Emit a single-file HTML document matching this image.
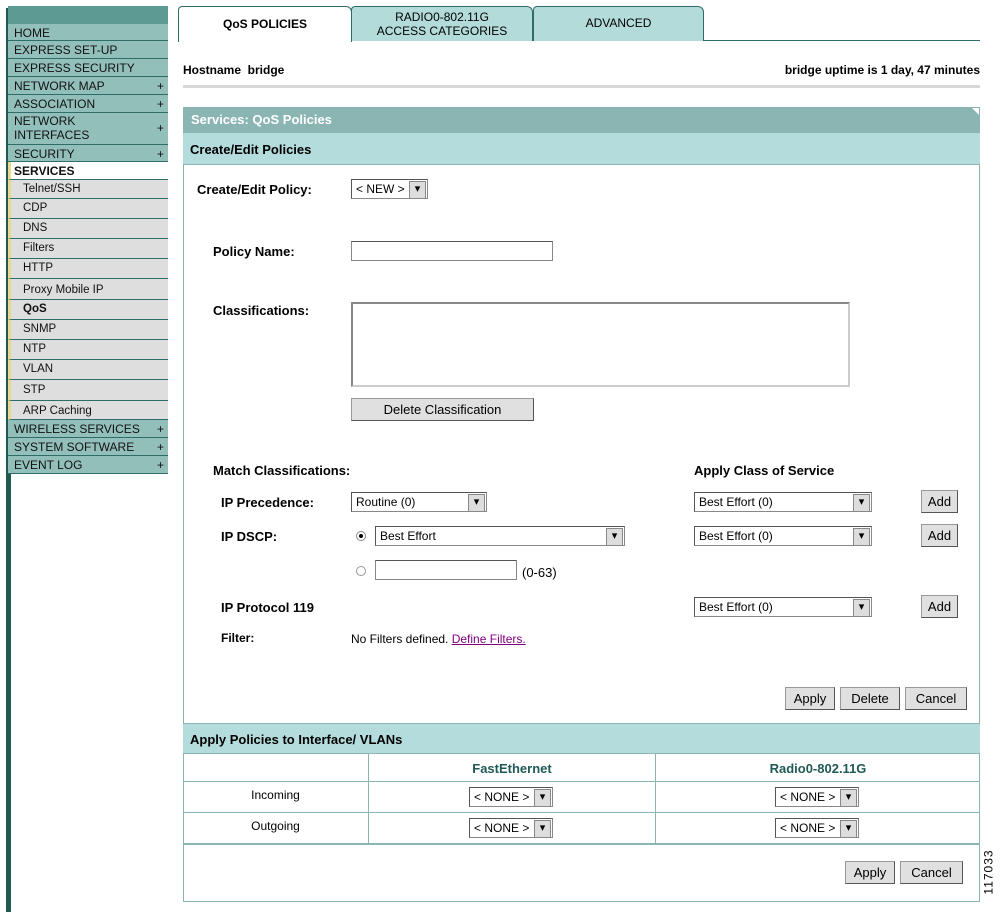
<!DOCTYPE html>
<html><head><meta charset="utf-8"><style>
*{box-sizing:border-box;margin:0;padding:0}
body{width:1005px;height:912px;background:#fff;font-family:"Liberation Sans",Arial,sans-serif;font-size:12px;color:#000;position:relative;overflow:hidden}
.a{position:absolute}
.nav{position:absolute;left:8px;width:160px;border-bottom:1px solid #2f6d68;padding-left:6px;padding-top:2px;line-height:15px;color:#111}
.t{background:#93bfbb}
.s{background:#dedede;padding-left:12px;border-left:3px solid #e8d890;font-size:11.5px}
.p{position:absolute;right:4px}
b{font-weight:bold}
.sel{position:absolute;border:1px solid #888;border-top-color:#555;border-left-color:#555;background:#fff;height:20px;line-height:18px;padding-left:4px;font-size:12px}
.sel:after{content:"▾";position:absolute;right:1px;top:1px;width:15px;height:16px;background:#ddd;border:1px solid #888;text-align:center;line-height:15px;font-size:11px}
.btn{position:absolute;background:#e0e0e0;border:1px solid #999;border-right-color:#555;border-bottom-color:#555;text-align:center;height:23px;line-height:21px;font-size:13px}
.lbl{position:absolute;font-weight:bold;font-size:12px}
.tab{position:absolute;top:6px;height:35px;background:#b3dbd9;border:1px solid #2f6d68;border-bottom:none;border-radius:4px 6px 0 0;text-align:center;font-size:12px;line-height:14px}
</style></head><body>
<div class="a" style="left:6px;top:8px;width:5px;height:904px;background:#1f5a50"></div>
<div class="a" style="left:8px;top:6px;width:160px;height:18px;background:#5e9a94"></div>
<div class="nav t" style="top:24px;height:17px">HOME</div>
<div class="nav t" style="top:41px;height:18px">EXPRESS SET-UP</div>
<div class="nav t" style="top:59px;height:18px">EXPRESS SECURITY</div>
<div class="nav t" style="top:77px;height:18px">NETWORK MAP<span class="p">+</span></div>
<div class="nav t" style="top:95px;height:18px">ASSOCIATION<span class="p">+</span></div>
<div class="nav t" style="top:113px;height:32px;line-height:14px;padding-top:1px">NETWORK<br>INTERFACES<span class="p" style="top:8px">+</span></div>
<div class="nav t" style="top:145px;height:17px">SECURITY<span class="p">+</span></div>
<div class="nav" style="top:162px;height:18px;background:#fff;border-left:3px solid #e8d890;padding-left:3px"><b>SERVICES</b></div>
<div class="nav s" style="top:180px;height:19px">Telnet/SSH</div>
<div class="nav s" style="top:199px;height:20px">CDP</div>
<div class="nav s" style="top:219px;height:20px">DNS</div>
<div class="nav s" style="top:239px;height:20px">Filters</div>
<div class="nav s" style="top:259px;height:20px">HTTP</div>
<div class="nav s" style="top:279px;height:21px;padding-top:4px">Proxy Mobile IP</div>
<div class="nav s" style="top:300px;height:20px"><b>QoS</b></div>
<div class="nav s" style="top:320px;height:20px">SNMP</div>
<div class="nav s" style="top:340px;height:20px">NTP</div>
<div class="nav s" style="top:360px;height:20px">VLAN</div>
<div class="nav s" style="top:380px;height:21px;padding-top:3px">STP</div>
<div class="nav s" style="top:401px;height:19px;padding-top:3px">ARP Caching</div>
<div class="nav t" style="top:420px;height:18px">WIRELESS SERVICES<span class="p">+</span></div>
<div class="nav t" style="top:438px;height:18px">SYSTEM SOFTWARE<span class="p">+</span></div>
<div class="nav t" style="top:456px;height:18px">EVENT LOG<span class="p">+</span></div>

<div class="a" style="left:178px;top:40px;width:802px;height:1px;background:#2f6d68"></div>
<div class="tab" style="left:178px;width:174px;background:#fff;height:36px;line-height:34px;font-weight:bold">QoS POLICIES</div>
<div class="tab" style="left:351px;width:182px;padding-top:3px">RADIO0-802.11G<br>ACCESS CATEGORIES</div>
<div class="tab" style="left:533px;width:171px;line-height:32px">ADVANCED</div>

<div class="lbl" style="left:183px;top:63px">Hostname&nbsp; bridge</div>
<div class="lbl" style="left:700px;top:63px;width:280px;text-align:right">bridge uptime is 1 day, 47 minutes</div>
<div class="a" style="left:183px;top:85px;width:797px;height:3px;background:#d8d8d8"></div>

<div class="a" style="left:183px;top:107px;width:797px;height:795px;border:1px solid #8ab5b2"></div>
<div class="a" style="left:183px;top:107px;width:797px;height:26px;background:#8ab5b2;color:#fff;font-weight:bold;font-size:13px;line-height:26px;padding-left:8px;clip-path:polygon(0 0,788px 0,797px 9px,797px 26px,0 26px)">Services: QoS Policies</div>
<div class="a" style="left:183px;top:133px;width:797px;height:32px;background:#b4dcdc;font-weight:bold;font-size:13px;line-height:34px;padding-left:7px;border-bottom:1px solid #8ab5b2">Create/Edit Policies</div>

<div class="lbl" style="left:197px;top:182px;font-size:13px">Create/Edit Policy:</div>
<div class="sel" style="left:351px;top:179px;width:77px">&lt; NEW &gt;</div>
<div class="lbl" style="left:213px;top:244px;font-size:13px">Policy Name:</div>
<div class="a" style="left:351px;top:241px;width:202px;height:20px;border:1px solid #888;border-top-color:#555"></div>
<div class="lbl" style="left:213px;top:303px;font-size:13px">Classifications:</div>
<div class="a" style="left:351px;top:302px;width:499px;height:85px;border:2px solid #888;border-right-color:#ccc;border-bottom-color:#ccc"></div>
<div class="btn" style="left:351px;top:398px;width:183px">Delete Classification</div>

<div class="lbl" style="left:213px;top:463px;font-size:13px">Match Classifications:</div>
<div class="lbl" style="left:694px;top:463px;font-size:13px">Apply Class of Service</div>
<div class="lbl" style="left:221px;top:495px;font-size:13px">IP Precedence:</div>
<div class="sel" style="left:351px;top:492px;width:136px">Routine (0)</div>
<div class="sel" style="left:694px;top:492px;width:178px">Best Effort (0)</div>
<div class="btn" style="left:921px;top:490px;width:37px">Add</div>
<div class="lbl" style="left:221px;top:529px;font-size:13px">IP DSCP:</div>
<div class="a" style="left:356px;top:531px;width:10px;height:10px;border:1px solid #888;border-radius:50%;background:#fff"><div style="position:absolute;left:2px;top:2px;width:4px;height:4px;border-radius:50%;background:#000"></div></div>
<div class="sel" style="left:375px;top:526px;width:250px">Best Effort</div>
<div class="sel" style="left:694px;top:526px;width:178px">Best Effort (0)</div>
<div class="btn" style="left:921px;top:524px;width:37px">Add</div>
<div class="a" style="left:356px;top:566px;width:10px;height:10px;border:1px solid #999;border-radius:50%"></div>
<div class="a" style="left:375px;top:560px;width:142px;height:20px;border:1px solid #888;border-top-color:#555"></div>
<div class="a" style="left:522px;top:565px;font-size:13px">(0-63)</div>
<div class="lbl" style="left:221px;top:600px;font-size:13px">IP Protocol 119</div>
<div class="sel" style="left:694px;top:597px;width:178px">Best Effort (0)</div>
<div class="btn" style="left:921px;top:595px;width:37px">Add</div>
<div class="lbl" style="left:221px;top:631px;font-size:12px">Filter:</div>
<div class="a" style="left:351px;top:632px">No Filters defined. <span style="color:#800080;text-decoration:underline">Define Filters.</span></div>
<div class="btn" style="left:785px;top:687px;width:50px">Apply</div>
<div class="btn" style="left:840px;top:687px;width:60px">Delete</div>
<div class="btn" style="left:905px;top:687px;width:62px">Cancel</div>

<div class="a" style="left:183px;top:723px;width:797px;height:31px;background:#b4dcdc;font-weight:bold;font-size:13px;line-height:31px;padding-left:7px;border-top:1px solid #8ab5b2;border-bottom:1px solid #8ab5b2">Apply Policies to Interface/ VLANs</div>
<div class="a" style="left:368px;top:754px;width:1px;height:90px;background:#8ab5b2"></div>
<div class="a" style="left:655px;top:754px;width:1px;height:90px;background:#8ab5b2"></div>
<div class="a" style="left:183px;top:781px;width:797px;height:1px;background:#8ab5b2"></div>
<div class="a" style="left:183px;top:812px;width:797px;height:1px;background:#8ab5b2"></div>
<div class="a" style="left:183px;top:843px;width:797px;height:2px;background:#8ab5b2"></div>
<div class="lbl" style="left:369px;top:761px;width:286px;text-align:center;color:#1f5a56;font-size:13px">FastEthernet</div>
<div class="lbl" style="left:656px;top:761px;width:324px;text-align:center;color:#1f5a56;font-size:13px">Radio0-802.11G</div>
<div class="a" style="left:183px;top:788px;width:185px;text-align:center">Incoming</div>
<div class="a" style="left:183px;top:819px;width:185px;text-align:center">Outgoing</div>
<div class="sel" style="left:469px;top:787px;width:84px">&lt; NONE &gt;</div>
<div class="sel" style="left:775px;top:787px;width:84px">&lt; NONE &gt;</div>
<div class="sel" style="left:469px;top:818px;width:84px">&lt; NONE &gt;</div>
<div class="sel" style="left:775px;top:818px;width:84px">&lt; NONE &gt;</div>
<div class="btn" style="left:845px;top:861px;width:50px">Apply</div>
<div class="btn" style="left:900px;top:861px;width:63px">Cancel</div>
<div class="a" style="left:966px;top:865px;transform:rotate(-90deg);font-size:12px;letter-spacing:1px">117033</div>
</body></html>
